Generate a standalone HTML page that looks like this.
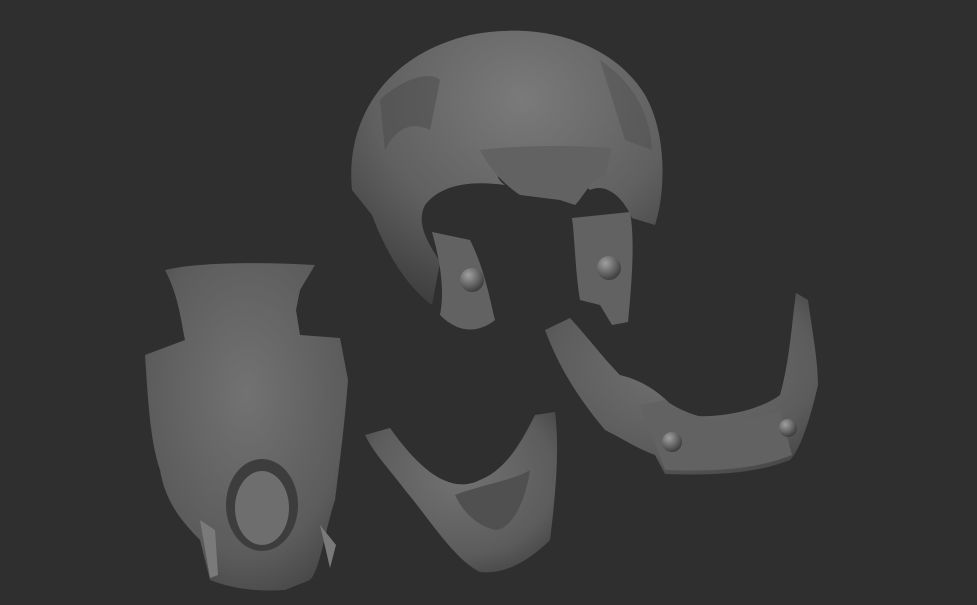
<!DOCTYPE html>
<html><head><meta charset="utf-8"><style>
html,body{margin:0;padding:0;background:#2f2f2f;width:977px;height:605px;overflow:hidden}
svg{display:block}
</style></head><body>
<svg width="977" height="605" viewBox="0 0 977 605" xmlns="http://www.w3.org/2000/svg">
<defs>
<radialGradient id="g1" cx="0.55" cy="0.25" r="0.8">
<stop offset="0" stop-color="#7a7a7a"/><stop offset="0.6" stop-color="#606060"/><stop offset="1" stop-color="#3e3e3e"/></radialGradient>
<radialGradient id="g2" cx="0.5" cy="0.4" r="0.7">
<stop offset="0" stop-color="#727272"/><stop offset="0.7" stop-color="#5c5c5c"/><stop offset="1" stop-color="#424242"/></radialGradient>
<radialGradient id="sp" cx="0.35" cy="0.3" r="0.7">
<stop offset="0" stop-color="#a0a0a0"/><stop offset="1" stop-color="#404040"/></radialGradient>
</defs>
<rect width="977" height="605" fill="#2f2f2f"/>
<path d="M352,190 C345,120 385,55 470,35 C545,20 615,45 645,95 C668,135 665,195 655,225 L632,218 C622,195 605,183 590,190 C575,175 560,150 520,160 C500,165 490,175 505,185 C470,180 440,185 425,205 C415,225 430,245 440,262 L432,305 C405,285 385,250 372,215 Z" fill="url(#g1)"/>
<path d="M380,100 C400,80 430,70 440,80 L430,130 C410,120 395,130 385,150 Z" fill="#4a4a4a" opacity="0.5"/>
<path d="M600,60 C630,80 650,110 652,150 L625,140 Z" fill="#4a4a4a" opacity="0.4"/>
<path d="M480,150 C520,145 570,145 612,148 L605,175 C590,180 585,195 575,205 L560,200 L520,195 C505,185 490,170 480,150 Z" fill="#626262"/>
<path d="M432,232 L470,240 C485,270 490,300 495,320 C480,332 460,335 440,315 C445,290 440,260 432,232 Z" fill="#626262"/>
<path d="M572,218 L630,212 C635,240 632,280 628,322 L612,325 L600,305 L580,300 C575,270 575,240 572,218 Z" fill="#626262"/>
<circle cx="472" cy="280" r="12" fill="url(#sp)"/>
<circle cx="609" cy="268" r="12" fill="url(#sp)"/>
<path d="M165,270 C200,262 260,262 315,265 L300,290 L296,310 L300,335 L340,338 L348,380 C345,420 340,460 335,500 C325,530 320,570 310,580 L285,590 C255,592 230,588 210,580 L200,540 C180,520 165,500 160,470 C150,440 148,400 145,355 L185,340 C180,315 178,295 165,270 Z" fill="url(#g2)"/>
<ellipse cx="262" cy="505" rx="36" ry="46" fill="#3d3d3d"/>
<ellipse cx="262" cy="508" rx="27" ry="37" fill="#6e6e6e"/>
<path d="M200,520 L210,578 L218,575 L215,530 Z" fill="#7a7a7a"/>
<path d="M320,525 L330,568 L336,545 Z" fill="#7a7a7a"/>
<path d="M365,435 L390,428 C420,470 450,495 480,480 C505,470 520,445 535,415 L555,412 C560,450 555,500 550,540 C530,560 505,575 480,572 C455,560 430,520 405,490 C390,470 375,455 365,435 Z" fill="url(#g2)"/>
<path d="M455,495 C480,485 515,480 530,470 C525,505 510,530 495,530 C475,525 462,510 455,495 Z" fill="#505050"/>
<path d="M545,330 L570,318 C590,340 605,360 620,375 C640,380 660,390 680,415 C720,420 760,410 780,395 C790,360 792,320 796,293 L808,300 C812,330 818,360 818,385 C810,420 800,450 790,460 C760,472 720,476 665,474 L655,455 C640,450 625,440 605,430 C580,400 560,370 545,330 Z" fill="url(#g2)"/>
<path d="M640,405 L665,400 C700,425 745,425 780,410 L792,455 C760,468 720,472 665,470 Z" fill="#626262"/>
<circle cx="672" cy="442" r="10" fill="url(#sp)"/>
<circle cx="788" cy="428" r="9" fill="url(#sp)"/>
</svg>
</body></html>
